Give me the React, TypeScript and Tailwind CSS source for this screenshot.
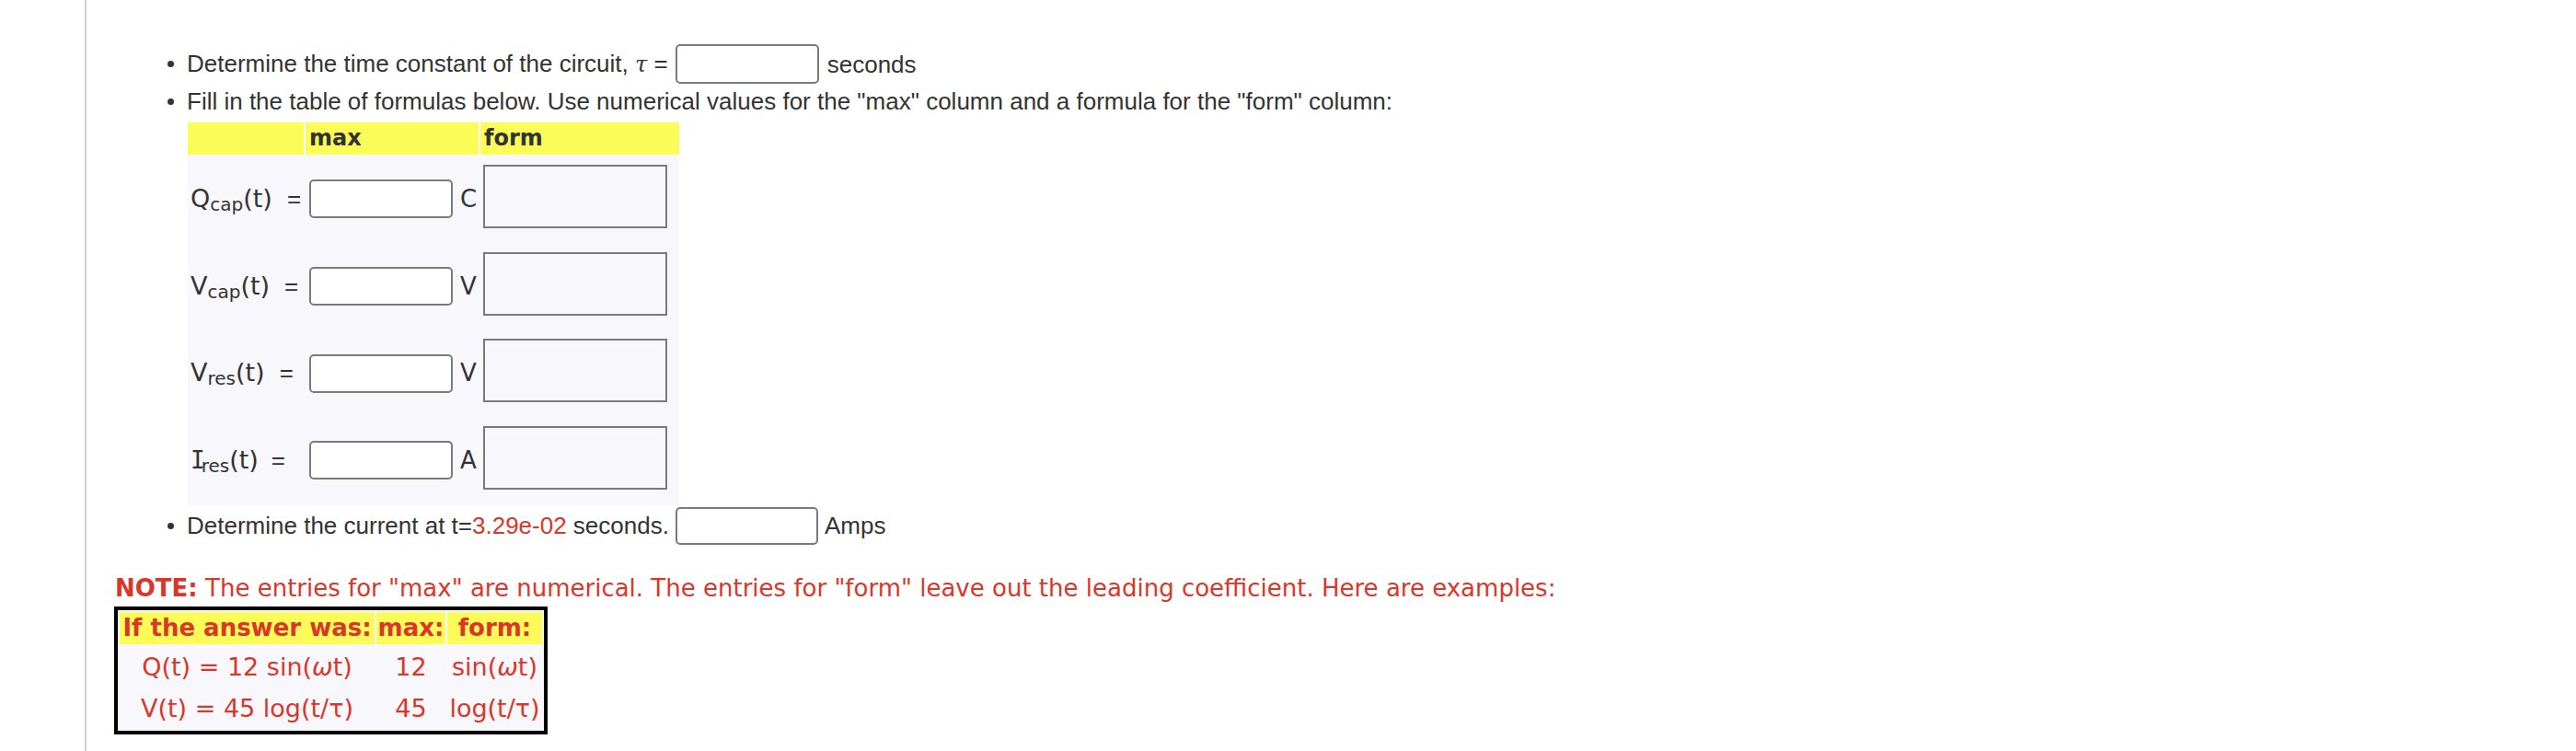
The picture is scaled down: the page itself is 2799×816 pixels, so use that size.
import React from "react";

const Dot = () => (
  <div className="w-[80px] shrink-0 flex justify-end pr-[14px]">
    <div className="w-[7px] h-[7px] rounded-full bg-[#333]" />
  </div>
);

const RoundInput = ({ w, h }: { w: string; h: string }) => (
  <div className={`${w} ${h} shrink-0 rounded-[5px] border-2 border-[#7b7b7b] bg-white`} />
);

type Row = { base: string; sub: string; unit: string; eqGap: string; serifI?: boolean };

const rows: Row[] = [
  { base: "Q", sub: "cap", unit: "C", eqGap: "ml-[16px]" },
  { base: "V", sub: "cap", unit: "V", eqGap: "ml-[16px]" },
  { base: "V", sub: "res", unit: "V", eqGap: "ml-[16px]" },
  { base: "I", sub: "res", unit: "A", eqGap: "ml-[14px]", serifI: true },
];

export default function App() {
  return (
    <div className="flex h-[816px] w-full bg-white font-['Liberation_Sans',Arial,sans-serif] text-[#333]">
      <div className="ml-[92px] w-[2px] h-full bg-[#d0d0d0] shrink-0" />
      <div className="pl-[29px] pt-[48px] flex flex-col">
        {/* bullet 1 */}
        <div className="flex items-center h-[43px] text-[26px] leading-[30px]">
          <Dot />
          <span>
            Determine the time constant of the circuit,{" "}
            <span className="italic font-['DejaVu_Serif',serif] text-[24px]">τ</span> =
          </span>
          <div className="ml-[8px]">
            <RoundInput w="w-[156px]" h="h-[43px]" />
          </div>
          <span className="ml-[9px]">seconds</span>
        </div>

        {/* bullet 2 */}
        <div className="flex items-center h-[30px] mt-[4px] text-[26px] leading-[30px]">
          <Dot />
          <span>
            Fill in the table of formulas below. Use numerical values for the "max" column and a
            formula for the "form" column:
          </span>
        </div>

        {/* formula table */}
        <div className="ml-[81px] mt-[8px] w-[534px] bg-[#f7f7fc] flex flex-col gap-[2px] pb-[2px] font-['DejaVu_Sans',Verdana,sans-serif]">
          <div className="grid grid-cols-[126px_188px_216px] gap-[2px] h-[35px] bg-white">
            <div className="bg-[#fcfc58]" />
            <div className="bg-[#fcfc58] pl-[4px] text-[24px] font-bold leading-[35px] text-[#333]">max</div>
            <div className="bg-[#fcfc58] pl-[4px] text-[24px] font-bold leading-[35px] text-[#333]">form</div>
          </div>
          {rows.map((r, i) => (
            <div key={i} className="grid grid-cols-[126px_188px_216px] gap-[2px] h-[92.7px]">
              <div className="flex items-center pl-[3px] text-[27px] text-[#333]">
                <span className="whitespace-nowrap">
                  {r.serifI ? (
                    <span className="font-['DejaVu_Sans_Mono',monospace] text-[26px] tracking-[-4px]">I</span>
                  ) : (
                    r.base
                  )}
                  <sub className="text-[20px] relative top-[4px] align-baseline">{r.sub}</sub>
                  (t)
                </span>
                <span className={`${r.eqGap} font-['Liberation_Sans',Arial,sans-serif] text-[26px]`}>=</span>
              </div>
              <div className="flex items-center pl-[4px]">
                <RoundInput w="w-[156px]" h="h-[42px]" />
                <span className="ml-[8px] text-[26px] text-[#333]">{r.unit}</span>
              </div>
              <div className="flex items-center pl-[3px]">
                <div className="w-[200px] h-[69px] mb-[6px] border-2 border-[#7a7a7a] bg-transparent" />
              </div>
            </div>
          ))}
        </div>

        {/* bullet 3 */}
        <div className="flex items-center h-[41px] mt-[2px] text-[26px] leading-[30px]">
          <Dot />
          <span>
            Determine the current at t=<span className="text-[#d9372b]">3.29e-02</span> seconds.
          </span>
          <div className="ml-[7px]">
            <RoundInput w="w-[155px]" h="h-[41px]" />
          </div>
          <span className="ml-[7px]">Amps</span>
        </div>

        {/* NOTE */}
        <div className="mt-[32px] ml-[2px] h-[30px] leading-[30px] text-[26px] text-[#d9372b] font-['DejaVu_Sans',Verdana,sans-serif] whitespace-nowrap">
          <span className="font-bold">NOTE:</span> The entries for "max" are numerical. The entries
          for "form" leave out the leading coefficient. Here are examples:
        </div>

        {/* example table */}
        <div className="mt-[5px] ml-[1px] w-fit border-[4px] border-black bg-[#f7f7fc] p-[2px] text-[#d9372b] font-['DejaVu_Sans',Verdana,sans-serif]">
          <div className="grid grid-cols-[277px_75px_103px] gap-[2px] h-[35px] bg-white">
            <div className="bg-[#fcfc58] font-bold text-[26px] leading-[35px] text-center whitespace-nowrap">
              If the answer was:
            </div>
            <div className="bg-[#fcfc58] font-bold text-[26px] leading-[35px] text-center">max:</div>
            <div className="bg-[#fcfc58] font-bold text-[26px] leading-[35px] text-center">form:</div>
          </div>
          <div className="grid grid-cols-[277px_75px_103px] gap-x-[2px] h-[45px] text-[27px] leading-[45px] mt-[2px]">
            <div className="text-center whitespace-nowrap">
              Q(t) = 12 sin(<span className="italic">ω</span>t)
            </div>
            <div className="text-center">12</div>
            <div className="text-center whitespace-nowrap">
              sin(<span className="italic">ω</span>t)
            </div>
          </div>
          <div className="grid grid-cols-[277px_75px_103px] gap-x-[2px] h-[45px] text-[27px] leading-[45px]">
            <div className="text-center whitespace-nowrap">V(t) = 45 log(t/τ)</div>
            <div className="text-center">45</div>
            <div className="text-center whitespace-nowrap">log(t/τ)</div>
          </div>
        </div>
      </div>
    </div>
  );
}
